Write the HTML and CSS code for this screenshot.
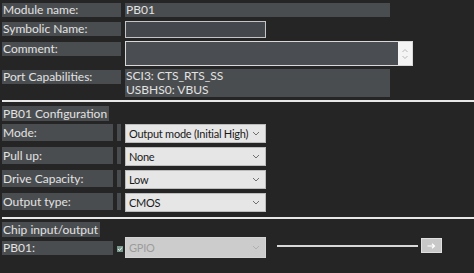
FILE: index.html
```html
<!DOCTYPE html>
<html>
<head>
<meta charset="utf-8">
<link rel="stylesheet" href="styles.css">
</head>
<body>
<div class="info">
  <div class="lbl r1">Module name:</div>
  <div class="val v1">PB01</div>
  <div class="lbl r2">Symbolic Name:</div>
  <div class="input v2"></div>
  <div class="lbl r3">Comment:</div>
  <div class="textarea v3"><div class="ta-body"></div><div class="ta-scroll"><svg width="8" height="16" viewBox="0 0 8 16"><path d="M1.5 6 L4 3.5 L6.5 6" fill="none" stroke="#b8b8b8" stroke-width="1"/><path d="M1.5 10 L4 12.5 L6.5 10" fill="none" stroke="#b8b8b8" stroke-width="1"/></svg></div></div>
  <div class="lbl r4">Port Capabilities:</div>
  <div class="val v4">SCI3: CTS_RTS_SS<br>USBHS0: VBUS</div>
</div>
<div class="sep s1"></div>
<div class="hdr h1">PB01 Configuration</div>
<div class="cfg">
  <div class="crow"><div class="clbl">Mode:</div><div class="tick"></div><div class="sel"><span class="opt">Output mode (Initial High)</span><svg class="chev" width="8" height="5" viewBox="0 0 8 5"><path d="M1 1 L4 4 L7 1" fill="none" stroke="#707070" stroke-width="1"/></svg></div></div>
  <div class="crow"><div class="clbl">Pull up:</div><div class="tick"></div><div class="sel"><span class="opt">None</span><svg class="chev" width="8" height="5" viewBox="0 0 8 5"><path d="M1 1 L4 4 L7 1" fill="none" stroke="#707070" stroke-width="1"/></svg></div></div>
  <div class="crow"><div class="clbl">Drive Capacity:</div><div class="tick"></div><div class="sel"><span class="opt">Low</span><svg class="chev" width="8" height="5" viewBox="0 0 8 5"><path d="M1 1 L4 4 L7 1" fill="none" stroke="#707070" stroke-width="1"/></svg></div></div>
  <div class="crow"><div class="clbl">Output type:</div><div class="tick"></div><div class="sel"><span class="opt">CMOS</span><svg class="chev" width="8" height="5" viewBox="0 0 8 5"><path d="M1 1 L4 4 L7 1" fill="none" stroke="#707070" stroke-width="1"/></svg></div></div>
</div>
<div class="sep s2"></div>
<div class="hdr h2">Chip input/output</div>
<div class="chip">
  <div class="clbl pbl">PB01:</div>
  <div class="chk"><svg width="6" height="6" viewBox="0 0 6 6"><rect width="6" height="6" fill="#7a9a90"/><path d="M1 3 L2.5 4.5 L5 1.5" fill="none" stroke="#e8f0ec" stroke-width="1"/></svg></div>
  <div class="sel dis"><span class="opt">GPIO</span><svg class="chev" width="8" height="5" viewBox="0 0 8 5"><path d="M1 1 L4 4 L7 1" fill="none" stroke="#b0b0b0" stroke-width="1"/></svg></div>
  <div class="wire"></div>
  <div class="btn"><svg width="9" height="6" viewBox="0 0 9 6"><path d="M0.5 3 H7.5 M5 0.8 L7.5 3 L5 5.2" fill="none" stroke="#ffffff" stroke-width="1.2"/></svg></div>
</div>
</body>
</html>
```
FILE: styles.css
```css
html, body {
  margin: 0;
  padding: 0;
  background: #252525;
  font-family: Lato, "Open Sans", sans-serif;
  font-size: 12px;
  color: #e2e2e2;
}
body {
  width: 474px;
  height: 273px;
  overflow: hidden;
  padding-top: 3px;
  box-sizing: border-box;
}
.info {
  display: grid;
  grid-template-columns: 119px auto;
  column-gap: 4px;
  row-gap: 3px;
  padding-left: 2px;
  justify-items: start;
  align-items: start;
}
.lbl, .clbl, .hdr, .val {
  background: #4a4d50;
  line-height: 14px;
  height: 14px;
  padding-left: 1px;
  box-sizing: border-box;
  white-space: nowrap;
}
.lbl { width: 119px; }
.r2 { margin-top: 2px; }
.r3 { margin-top: 1px; }
.r4 { margin-top: 1px; }
.val { width: 265px; }
.v1 { padding-left: 1px; }
.v4 { height: 28px; line-height: 14px; margin-top: 0; }
.input {
  width: 141px;
  height: 17px;
  box-sizing: border-box;
  border: 1px solid #c4c4c4;
  background: #44484c;
  margin-top: 1px;
}
.textarea {
  width: 288px;
  height: 25px;
  box-sizing: border-box;
  border: 1px solid #d8d8d8;
  display: flex;
  background: #4a4e52;
}
.ta-body { flex: 1; }
.ta-scroll {
  width: 14px;
  background: #f4f4f4;
  display: flex;
  align-items: center;
  justify-content: center;
}
.sep {
  height: 2px;
  background: #e8e8e8;
  margin-left: 2px;
}
.s1 { margin-top: 3px; }
.s2 { margin-top: 5px; }
.hdr {
  margin-left: 2px;
  height: 15px;
  line-height: 15px;
  width: fit-content;
  padding-right: 2px;
}
.h1 { margin-top: 4px; }
.h2 { margin-top: 3px; }
.cfg {
  display: flex;
  flex-direction: column;
  gap: 4px;
  margin-top: 3px;
  padding-left: 2px;
}
.crow {
  display: flex;
  align-items: flex-start;
  height: 19px;
}
.clbl {
  width: 111px;
  height: 17px;
  line-height: 17px;
}
.tick {
  width: 4px;
  height: 17px;
  margin-left: 4px;
  background: #4a4d50;
}
.sel {
  margin-left: 4px;
  width: 141px;
  height: 19px;
  box-sizing: border-box;
  border: 1px solid #bcbcbc;
  background: #e6e6e6;
  color: #1a1a1a;
  display: flex;
  align-items: center;
  padding: 0 5px 0 3px;
  font-size: 11px;
  letter-spacing: -0.25px;
  white-space: nowrap;
}
.opt {
  flex: 1;
  min-width: 0;
  overflow: hidden;
}
.chev { flex: none; margin-left: 2px; }
.chip {
  display: flex;
  align-items: flex-start;
  padding-left: 2px;
  margin-top: 0px;
}
.pbl {
  margin-top: 4px;
  height: 14px;
  line-height: 14px;
}
.chk {
  margin-left: 4px;
  margin-top: 9px;
  width: 6px;
  height: 6px;
  display: flex;
}
.sel.dis {
  margin-left: 2px;
  height: 21px;
  background: #cccccc;
  border-color: #d4d4d4;
  color: #9c9c9c;
}
.wire {
  margin-left: 11px;
  margin-top: 8px;
  width: 141px;
  height: 2px;
  background: #d8d8d8;
}
.btn {
  margin-left: 3px;
  margin-top: 1px;
  width: 21px;
  height: 15px;
  box-sizing: border-box;
  background: #c8c8c8;
  border: 1px solid #e0e0e0;
  display: flex;
  align-items: center;
  justify-content: center;
}
```
